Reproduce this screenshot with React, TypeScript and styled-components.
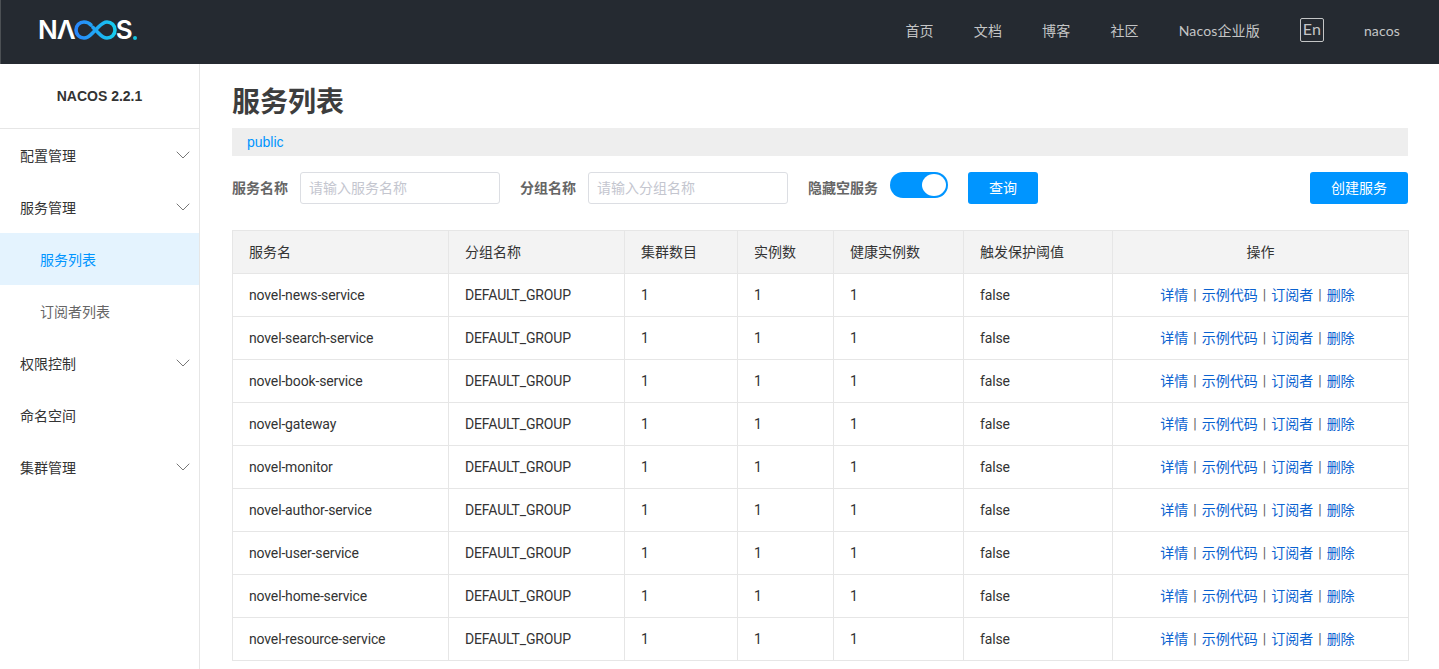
import styled, { createGlobalStyle } from 'styled-components';
import { ChevronDown } from 'lucide-react';

const GlobalStyle = createGlobalStyle`
  html, body {
    margin: 0;
    padding: 0;
    height: 100%;
    overflow: hidden;
  }
  body {
    background: #fff;
    color: #333;
    font-family: "Liberation Sans", "Noto Sans CJK SC", sans-serif;
    font-size: 14px;
  }
  * { box-sizing: border-box; }
`;

const Header = styled.header`
  height: 64px;
  background: #252a31;
  border-left: 1px solid #4c5054;
  display: flex;
  align-items: center;
  justify-content: space-between;
  padding: 0 39px;
`;

const Logo = styled.div`
  display: flex;
  align-items: center;
  color: #fff;
  font-family: "Inter", sans-serif;
  font-weight: 600;
  font-size: 26px;
  line-height: 26px;
  letter-spacing: -1px;
  margin: 0 0 4px -2px;
`;

const LogoDot = styled.span`
  flex: none;
  width: 4px;
  height: 4px;
  border-radius: 50%;
  background: #16c4e0;
  margin: 16px 0 0 1px;
`;

const Nav = styled.nav`
  display: flex;
  align-items: center;
  gap: 40px;
  color: #c4c5c6;
  font-family: "Lato", "Noto Sans CJK SC", sans-serif;
  font-size: 14px;
  letter-spacing: 0.15px;
  padding-bottom: 4px;
`;

const LangBox = styled.span`
  width: 24px;
  height: 24px;
  border: 1px solid #c4c5c6;
  border-radius: 2px;
  display: flex;
  align-items: center;
  justify-content: center;
  font-size: 16px;
  line-height: 18px;
  padding-bottom: 3px;
`;

const Body = styled.div`
  display: flex;
  height: 605px;
`;

const Sidebar = styled.aside`
  width: 200px;
  flex: none;
  border-right: 1px solid #e6e6e6;
`;

const Version = styled.div`
  height: 65px;
  border-bottom: 1px solid #e6e6e6;
  display: flex;
  align-items: center;
  justify-content: center;
  font-weight: 700;
  font-size: 14px;
  color: #333;
  padding-bottom: 1px;
`;

const MenuList = styled.div`
  display: flex;
  flex-direction: column;
`;

const MenuItem = styled.div<{ $active?: boolean; $sub?: boolean }>`
  height: 52px;
  display: flex;
  align-items: center;
  justify-content: space-between;
  padding: 0 4px 0 ${p => (p.$sub ? '40px' : '20px')};
  color: ${p => (p.$active ? '#0095ff' : p.$sub ? '#666' : '#333')};
  background: ${p => (p.$active ? '#e4f3fe' : 'transparent')};
  font-size: 14px;
`;

const Main = styled.main`
  flex: 1;
  padding: 0 31px 0 32px;
  min-width: 0;
`;

const Title = styled.h1`
  margin: 0;
  height: 64px;
  display: flex;
  align-items: center;
  font-size: 28px;
  font-weight: 600;
  color: #3d3d3d;
  padding-top: 8px;
`;

const Namespace = styled.div`
  height: 28px;
  background: #eee;
  padding-left: 15px;
  display: flex;
  align-items: center;
  color: #0095ff;
  font-size: 14px;
`;

const Toolbar = styled.div`
  display: flex;
  align-items: center;
  margin-top: 16px;
  height: 32px;
`;

const FieldLabel = styled.label`
  color: #666;
  font-weight: 700;
  font-size: 14px;
  margin-right: 12px;
  padding-bottom: 3px;
`;

const SearchInput = styled.input<{ $width: number }>`
  width: ${p => p.$width}px;
  height: 32px;
  border: 1px solid #dcdee3;
  border-radius: 3px;
  padding: 0 8px 1px;
  margin-right: 20px;
  font: inherit;
  outline: none;
  &::placeholder {
    color: #c4c6cf;
  }
`;

const Switch = styled.div`
  width: 58px;
  height: 26px;
  border-radius: 13px;
  background: #0095ff;
  display: flex;
  align-items: center;
  justify-content: flex-end;
  padding-right: 2px;
  align-self: flex-start;
  margin-right: 20px;
`;

const SwitchKnob = styled.span`
  width: 24px;
  height: 22px;
  border-radius: 50%;
  background: #fff;
`;

const Button = styled.button<{ $width: number }>`
  width: ${p => p.$width}px;
  height: 32px;
  border: none;
  border-radius: 3px;
  background: #0095ff;
  color: #fff;
  font: inherit;
  padding: 0 0 3px;
`;

const Spacer = styled.div`
  flex: 1;
`;

const Table = styled.table`
  width: 1176px;
  margin-top: 26px;
  border-collapse: collapse;
  table-layout: fixed;
  font-family: "Roboto", "Noto Sans CJK SC", sans-serif;
  font-size: 14px;
`;

const Th = styled.th<{ $center?: boolean }>`
  height: 43px;
  background: #f3f3f3;
  border: 1px solid #e6e6e6;
  padding: 0 16px 2px;
  text-align: ${p => (p.$center ? 'center' : 'left')};
  font-weight: 400;
  color: #333;
`;

const Td = styled.td`
  height: 43px;
  border: 1px solid #e6e6e6;
  padding: 0 16px;
  color: #333;
  letter-spacing: -0.15px;
  white-space: nowrap;
`;

const ActionCell = styled(Td)`
  padding: 0 22px 2px 16px;
  text-align: center;
  letter-spacing: 0;
`;

const ActionLink = styled.a`
  color: #0a62d0;
`;

const Sep = styled.span`
  color: #666;
  margin: 0 5px;
`;

const LogoMark = () => (
  <svg width="43" height="20" viewBox="0 0 43 20" fill="none" style={{ margin: '0 -1px 0 -1px' }}>
    <defs>
      <linearGradient id="loop" x1="0" x2="43" y1="0" y2="0" gradientUnits="userSpaceOnUse">
        <stop offset="0" stopColor="#2b82fa" />
        <stop offset="0.5" stopColor="#20a8f5" />
        <stop offset="1" stopColor="#14d0ee" />
      </linearGradient>
    </defs>
    <path
      d="M17 5 C15 2.800 12.500 2 10 2 C5.500 2 2 5.500 2 10 C2 14.500 5.500 18 10 18 C15 18 17.500 13.500 21.500 10 C25.500 6.500 28 2 33 2 C37.500 2 41 5.500 41 10 C41 14.500 37.500 18 33 18 C28 18 25.500 13.500 21.500 10"
      stroke="url(#loop)"
      strokeWidth="3.6"
      strokeLinecap="round"
    />
    <path d="M21.500 10 L19 7.500" stroke="url(#loop)" strokeWidth="3.6" strokeLinecap="round" />
  </svg>
);

const menu = [
  { label: '配置管理', arrow: true },
  { label: '服务管理', arrow: true },
  { label: '服务列表', sub: true, active: true },
  { label: '订阅者列表', sub: true },
  { label: '权限控制', arrow: true },
  { label: '命名空间' },
  { label: '集群管理', arrow: true },
];

const columns = [
  { title: '服务名', width: 216 },
  { title: '分组名称', width: 176 },
  { title: '集群数目', width: 113 },
  { title: '实例数', width: 96 },
  { title: '健康实例数', width: 130 },
  { title: '触发保护阈值', width: 149 },
  { title: '操作', width: 296, center: true },
];

const services = [
  'novel-news-service',
  'novel-search-service',
  'novel-book-service',
  'novel-gateway',
  'novel-monitor',
  'novel-author-service',
  'novel-user-service',
  'novel-home-service',
  'novel-resource-service',
];

export default function App() {
  return (
    <>
      <GlobalStyle />
      <Header>
        <Logo>
          NΛ
          <LogoMark />
          S
          <LogoDot />
        </Logo>
        <Nav>
          <span>首页</span>
          <span>文档</span>
          <span>博客</span>
          <span>社区</span>
          <span>Nacos企业版</span>
          <LangBox>En</LangBox>
          <span>nacos</span>
        </Nav>
      </Header>
      <Body>
        <Sidebar>
          <Version>NACOS 2.2.1</Version>
          <MenuList>
            {menu.map(item => (
              <MenuItem key={item.label} $sub={item.sub} $active={item.active}>
                {item.label}
                {item.arrow && <ChevronDown size={24} strokeWidth={1} color="#777" />}
              </MenuItem>
            ))}
          </MenuList>
        </Sidebar>
        <Main>
          <Title>服务列表</Title>
          <Namespace>public</Namespace>
          <Toolbar>
            <FieldLabel>服务名称</FieldLabel>
            <SearchInput $width={200} placeholder="请输入服务名称" />
            <FieldLabel>分组名称</FieldLabel>
            <SearchInput $width={200} placeholder="请输入分组名称" />
            <FieldLabel>隐藏空服务</FieldLabel>
            <Switch>
              <SwitchKnob />
            </Switch>
            <Button $width={70}>查询</Button>
            <Spacer />
            <Button $width={98}>创建服务</Button>
          </Toolbar>
          <Table>
            <colgroup>
              {columns.map(col => (
                <col key={col.title} width={col.width} />
              ))}
            </colgroup>
            <thead>
              <tr>
                {columns.map(col => (
                  <Th key={col.title} $center={col.center}>
                    {col.title}
                  </Th>
                ))}
              </tr>
            </thead>
            <tbody>
              {services.map(name => (
                <tr key={name}>
                  <Td>{name}</Td>
                  <Td>DEFAULT_GROUP</Td>
                  <Td>1</Td>
                  <Td>1</Td>
                  <Td>1</Td>
                  <Td>false</Td>
                  <ActionCell>
                    <ActionLink>详情</ActionLink>
                    <Sep>|</Sep>
                    <ActionLink>示例代码</ActionLink>
                    <Sep>|</Sep>
                    <ActionLink>订阅者</ActionLink>
                    <Sep>|</Sep>
                    <ActionLink>删除</ActionLink>
                  </ActionCell>
                </tr>
              ))}
            </tbody>
          </Table>
        </Main>
      </Body>
    </>
  );
}
